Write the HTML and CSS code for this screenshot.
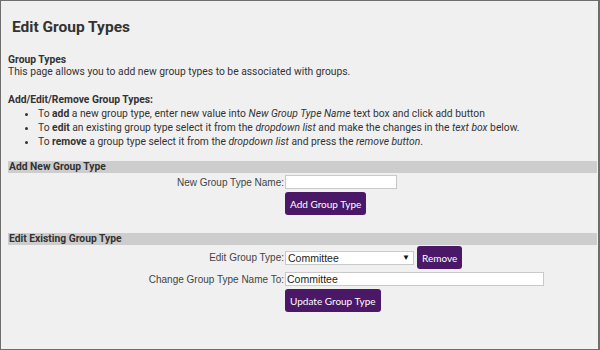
FILE: index.html
```html
<!DOCTYPE html>
<html>
<head>
<meta charset="utf-8">
<link rel="stylesheet" href="styles.css">
</head>
<body>
<div class="frame">
  <h1 class="title">Edit Group Types</h1>
  <div class="intro">
    <div class="bold">Group Types</div>
    <div>This page allows you to add new group types to be associated with groups.</div>
  </div>
  <div class="help">
    <div class="bold">Add/Edit/Remove Group Types:</div>
    <ul class="list">
      <li>To <b>add</b> a new group type, enter new value into <i>New Group Type Name</i> text box and click add button</li>
      <li>To <b>edit</b> an existing group type select it from the <i>dropdown list</i> and make the changes in the <i>text box</i> below.</li>
      <li>To <b>remove</b> a group type select it from the <i>dropdown list</i> and press the <i>remove button</i>.</li>
    </ul>
  </div>
  <div class="section">
    <div class="bar">Add New Group Type</div>
    <div class="form">
      <label class="label">New Group Type Name:</label>
      <div class="field"><input class="text short" type="text" value=""></div>
      <div></div>
      <div class="field"><button class="btn">Add Group Type</button></div>
    </div>
  </div>
  <div class="section second">
    <div class="bar">Edit Existing Group Type</div>
    <div class="form tight">
      <label class="label">Edit Group Type:</label>
      <div class="field row">
        <span class="selwrap"><select class="sel"><option>Committee</option></select><span class="arrow">▼</span></span>
        <button class="btn">Remove</button>
      </div>
      <label class="label">Change Group Type Name To:</label>
      <div class="field"><input class="text long" type="text" value="Committee"></div>
      <div></div>
      <div class="field"><button class="btn">Update Group Type</button></div>
    </div>
  </div>
</div>
</body>
</html>
```
FILE: styles.css
```css
html, body {
  margin: 0;
  padding: 0;
}
body {
  width: 600px;
  height: 350px;
  overflow: hidden;
  font-family: Roboto, "Liberation Sans", sans-serif;
  font-size: 10.3px;
  color: #333;
}
.frame {
  box-sizing: border-box;
  width: 600px;
  height: 350px;
  background: #f0f0f0;
  border: 1px solid #6e6e6e;
  border-right-width: 2px;
  padding: 0 1px 0 7px;
}
.title {
  margin: 0;
  padding: 16px 0 0 4px;
  font-size: 15.5px;
  font-weight: 700;
  line-height: 20px;
  color: #333;
}
.intro {
  margin-top: 17px;
  line-height: 12px;
}
.bold {
  font-weight: 700;
}
.help {
  margin-top: 15px;
  line-height: 14px;
}
.list {
  margin: 0;
  padding-left: 30px;
  line-height: 14px;
}
.section {
  margin-top: 12px;
}
.section.second {
  margin-top: 18px;
}
.bar {
  background: #cdcdcd;
  font-weight: 700;
  line-height: 12px;
  height: 12px;
  padding-left: 1px;
}
.form {
  display: grid;
  grid-template-columns: 277px 1fr;
  row-gap: 3px;
  margin-top: 2px;
  align-items: center;
}
.form.tight {
  margin-top: 1px;
}
.label {
  text-align: right;
  padding-right: 1px;
  font-family: "Liberation Sans", Arial, sans-serif;
  font-size: 10px;
  color: #444;
}
.field {
  display: flex;
  align-items: center;
}
.row {
  gap: 3px;
}
.text {
  box-sizing: border-box;
  height: 14px;
  margin: 0;
  padding: 0 1px;
  border: 1px solid #c9c9c9;
  background: #fff;
  font-family: "Liberation Sans", Arial, sans-serif;
  font-size: 10.5px;
  color: #222;
  outline: none;
}
.short {
  width: 112px;
}
.long {
  width: 259px;
}
.selwrap {
  position: relative;
  display: inline-block;
  height: 14px;
}
.sel {
  box-sizing: border-box;
  display: block;
  -webkit-appearance: none;
  appearance: none;
  width: 129px;
  height: 14px;
  margin: 0;
  padding: 0 2px;
  border: 1px solid #c9c9c9;
  border-radius: 0;
  background: #fff;
  font-family: "Liberation Sans", Arial, sans-serif;
  font-size: 10.5px;
  line-height: 12px;
  color: #222;
}
.arrow {
  position: absolute;
  right: 4px;
  top: 2px;
  font-size: 8px;
  line-height: 10px;
  color: #111;
  pointer-events: none;
}
.btn {
  box-sizing: border-box;
  height: 23px;
  margin: 0;
  padding: 0 5px;
  border: none;
  border-radius: 3px;
  background: #4a1866;
  color: #fff;
  font-family: Lato, "Open Sans", sans-serif;
  font-size: 10px;
  font-weight: 400;
}
```
